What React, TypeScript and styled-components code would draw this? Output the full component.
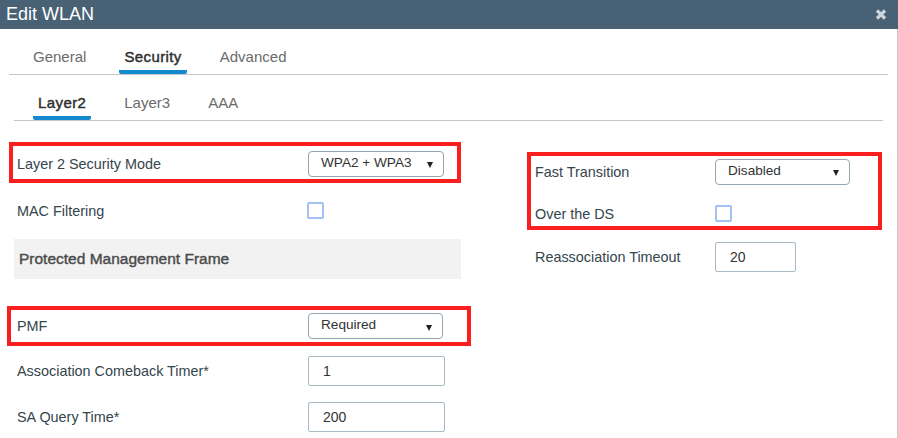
import styled, { createGlobalStyle } from "styled-components";

const GlobalStyle = createGlobalStyle`
    *, *::before, *::after { box-sizing: border-box; }
    body {
        margin: 0;
        background: #fff;
        font-family: "Liberation Sans", Arial, sans-serif;
    }
`;

const Window = styled.div`
    width: 898px;
    height: 438px;
    overflow: hidden;
    display: flex;
    flex-direction: column;
`;

const TitleBar = styled.header`
    flex: none;
    height: 29px;
    background: #486175;
    color: #fff;
    display: flex;
    align-items: center;
    justify-content: space-between;
    padding: 0 11px 0 6px;
    font-size: 18px;
`;

const Content = styled.div`
    flex: 1;
    border-right: 1px solid #c9c9c9;
`;

const TabBar = styled.nav<{ $left: number; $right: number }>`
    display: flex;
    gap: 28px;
    height: 46px;
    margin: 0 ${p => p.$right}px 0 ${p => p.$left}px;
    padding-left: 19px;
    border-bottom: 1px solid #c6c6c6;
`;

const Tab = styled.div<{ $active?: boolean }>`
    padding: 19px 5px 0;
    font-size: 15px;
    color: ${p => (p.$active ? "#2f2f2f" : "#6b6b6b")};
    letter-spacing: ${p => (p.$active ? "0.4px" : "0")};
    -webkit-text-stroke: ${p => (p.$active ? "0.45px #2f2f2f" : "0")};
    border-bottom: 4px solid ${p => (p.$active ? "#1489cf" : "transparent")};
    border-radius: 2px;
`;

const Body = styled.div`
    display: flex;
    gap: 56px;
    padding-left: 7px;
`;

const Column = styled.div<{ $w: number; $top?: number }>`
    width: ${p => p.$w}px;
    padding-top: ${p => p.$top ?? 0}px;
    display: flex;
    flex-direction: column;
`;

const Highlight = styled.div<{ $mt: number; $ml: number; $w: number; $h: number }>`
    margin: ${p => p.$mt}px 0 0 ${p => p.$ml}px;
    width: ${p => p.$w}px;
    height: ${p => p.$h}px;
    border: 4px solid #fa1f1f;
    display: flex;
    flex-direction: column;
`;

const Field = styled.div<{ $h: number; $pl: number; $pt?: number }>`
    display: flex;
    align-items: center;
    height: ${p => p.$h}px;
    padding-left: ${p => p.$pl}px;
    padding-top: ${p => p.$pt ?? 0}px;
    flex: none;
    font-size: 14.4px;
    color: #34454c;
`;

const Label = styled.span<{ $w: number }>`
    width: ${p => p.$w}px;
    flex: none;
`;

const Select = styled.div<{ $w: number }>`
    width: ${p => p.$w}px;
    height: 26px;
    border: 1px solid #93a7b1;
    border-radius: 4px;
    display: flex;
    align-items: center;
    justify-content: space-between;
    padding: 0 10px 3px 12px;
    font-size: 13.6px;
    color: #333;
`;

const Caret = styled.span`
    width: 0;
    height: 0;
    margin-top: 6px;
    border-left: 3.5px solid transparent;
    border-right: 3.5px solid transparent;
    border-top: 6px solid #222;
`;

const TextInput = styled.input<{ $w: number }>`
    width: ${p => p.$w}px;
    height: 30px;
    border: 1px solid #a9bac2;
    border-radius: 2px;
    padding: 0 14px;
    font: 14px "Liberation Sans", Arial, sans-serif;
    color: #333;
    outline: none;
`;

const Checkbox = styled.span`
    width: 17px;
    height: 17px;
    border: 2px solid #a3c1f3;
    border-radius: 2px;
`;

const SectionHead = styled.div`
    margin: 1px 0 0 7px;
    width: 447px;
    height: 40px;
    background: #f2f2f2;
    display: flex;
    align-items: center;
    padding-left: 5px;
    font-size: 15.5px;
    color: #4a4a4a;
    -webkit-text-stroke: 0.4px #4a4a4a;
`;

const CloseIcon = () => (
    <svg width="12" height="11" viewBox="0 0 12 11">
        <path d="M2 1.5l8 8M10 1.5l-8 8" stroke="#cdd5dc" strokeWidth="3.2" />
    </svg>
);

const Dropdown = ({ value, w }: { value: string; w: number }) => (
    <Select $w={w}>
        {value}
        <Caret />
    </Select>
);

function App() {
    return <Window>
        <GlobalStyle />
        <TitleBar>
            Edit WLAN
            <CloseIcon />
        </TitleBar>
        <Content>
            <TabBar $left={9} $right={9}>
                <Tab>General</Tab>
                <Tab $active>Security</Tab>
                <Tab>Advanced</Tab>
            </TabBar>
            <TabBar $left={14} $right={14}>
                <Tab $active>Layer2</Tab>
                <Tab>Layer3</Tab>
                <Tab>AAA</Tab>
            </TabBar>
            <Body>
                <Column $w={464}>
                    <Highlight $mt={21} $ml={2} $w={452} $h={41}>
                        <Field $h={33} $pl={4} $pt={2}>
                            <Label $w={291}>Layer 2 Security Mode</Label>
                            <Dropdown value="WPA2 + WPA3" w={136} />
                        </Field>
                    </Highlight>
                    <Field $h={55} $pl={10}>
                        <Label $w={290}>MAC Filtering</Label>
                        <Checkbox />
                    </Field>
                    <SectionHead>Protected Management Frame</SectionHead>
                    <Highlight $mt={27} $ml={0} $w={464} $h={40}>
                        <Field $h={32} $pl={6}>
                            <Label $w={291}>PMF</Label>
                            <Dropdown value="Required" w={135} />
                        </Field>
                    </Highlight>
                    <Field $h={50} $pl={10}>
                        <Label $w={291}>Association Comeback Timer*</Label>
                        <TextInput $w={137} defaultValue="1" />
                    </Field>
                    <Field $h={42} $pl={10}>
                        <Label $w={291}>SA Query Time*</Label>
                        <TextInput $w={137} defaultValue="200" />
                    </Field>
                </Column>
                <Column $w={355} $top={31}>
                    <Highlight $mt={0} $ml={0} $w={355} $h={78}>
                        <Field $h={31} $pl={4}>
                            <Label $w={180}>Fast Transition</Label>
                            <Dropdown value="Disabled" w={135} />
                        </Field>
                        <Field $h={39} $pl={4} $pt={14}>
                            <Label $w={180}>Over the DS</Label>
                            <Checkbox />
                        </Field>
                    </Highlight>
                    <Field $h={54} $pl={8}>
                        <Label $w={180}>Reassociation Timeout</Label>
                        <TextInput $w={81} defaultValue="20" />
                    </Field>
                </Column>
            </Body>
        </Content>
    </Window>
}
export default App;
